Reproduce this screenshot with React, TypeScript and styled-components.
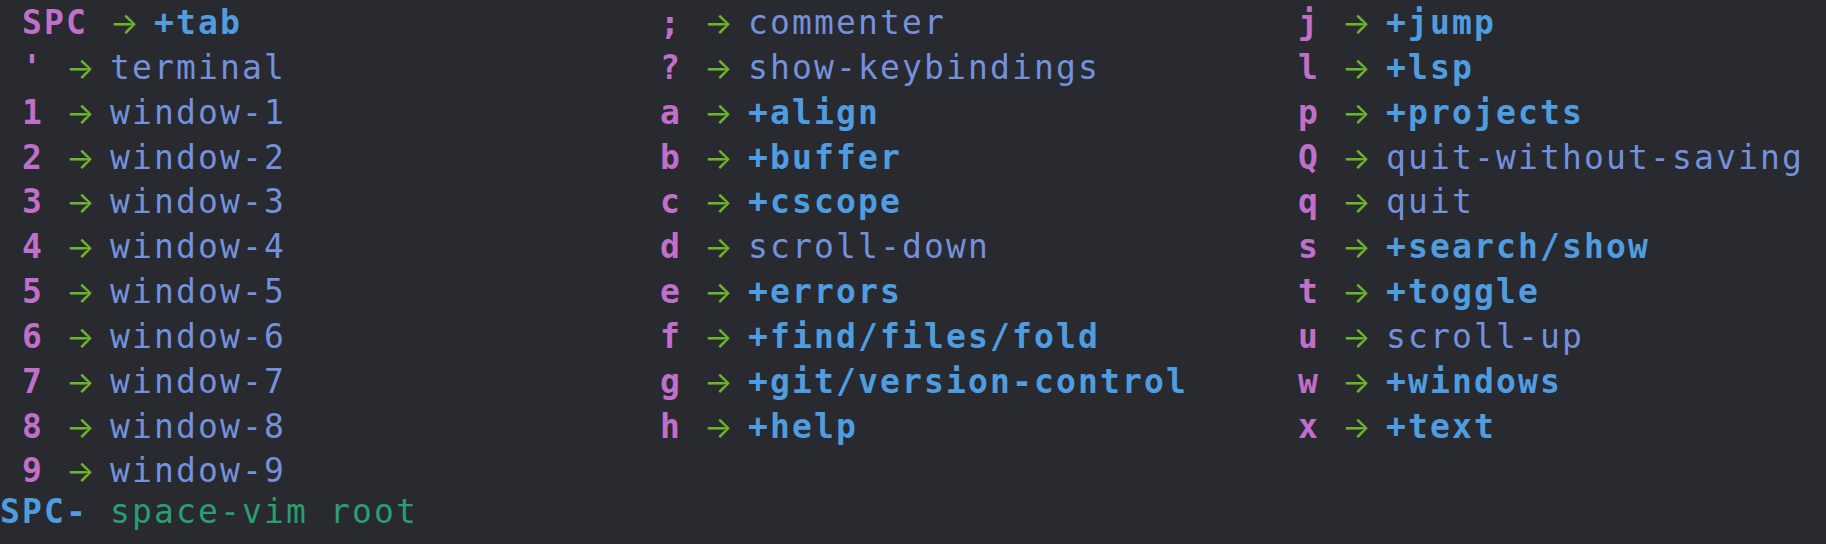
import React from "react";
import styled, { createGlobalStyle } from "styled-components";

const Global = createGlobalStyle`
  html, body {
    margin: 0;
    padding: 0;
    background: #282a2f;
  }
  body {
    width: 1826px;
    height: 544px;
    overflow: hidden;
  }
`;

const Screen = styled.div`
  width: 1826px;
  height: 544px;
  background: #282a2f;
  font-family: "DejaVu Sans Mono", "Liberation Mono", monospace;
  font-size: 33px;
  letter-spacing: 2.13px;
  white-space: pre;
  padding-top: 1px;
  box-sizing: border-box;
`;

const Grid = styled.div`
  display: grid;
  grid-template-columns: 638px 638px 550px;
`;

const Column = styled.div`
  display: flex;
  flex-direction: column;
`;

const Row = styled.div`
  height: 44.85px;
  line-height: 44.85px;
`;

const Key = styled.span`
  color: #c06fca;
  font-weight: bold;
`;

const Arrow = styled.span`
  display: inline-block;
  width: 22px;
  line-height: 1;
  text-align: center;
  letter-spacing: 0;
  color: #6db42b;
  font-family: "Inter", "Noto Sans", sans-serif;
  font-size: 30px;
  font-weight: 400;
`;

const Desc = styled.span<{ $group: boolean }>`
  color: ${(p) => (p.$group ? "#4f9de0" : "#7391dc")};
  font-weight: ${(p) => (p.$group ? "bold" : "normal")};
`;

const Footer = styled.div`
  line-height: 28px;
  height: 28px;
  margin-top: 4px;
`;

const Prefix = styled.span`
  color: #4f9de0;
  font-weight: bold;
`;

const RootName = styled.span`
  color: #2a9e70;
`;

type Entry = [string, string];

const col1: Entry[] = [
  ["SPC", "+tab"],
  ["'", "terminal"],
  ["1", "window-1"],
  ["2", "window-2"],
  ["3", "window-3"],
  ["4", "window-4"],
  ["5", "window-5"],
  ["6", "window-6"],
  ["7", "window-7"],
  ["8", "window-8"],
  ["9", "window-9"],
];

const col2: Entry[] = [
  [";", "commenter"],
  ["?", "show-keybindings"],
  ["a", "+align"],
  ["b", "+buffer"],
  ["c", "+cscope"],
  ["d", "scroll-down"],
  ["e", "+errors"],
  ["f", "+find/files/fold"],
  ["g", "+git/version-control"],
  ["h", "+help"],
];

const col3: Entry[] = [
  ["j", "+jump"],
  ["l", "+lsp"],
  ["p", "+projects"],
  ["Q", "quit-without-saving"],
  ["q", "quit"],
  ["s", "+search/show"],
  ["t", "+toggle"],
  ["u", "scroll-up"],
  ["w", "+windows"],
  ["x", "+text"],
];

const KeyColumn = ({ entries }: { entries: Entry[] }) => (
  <Column>
    {entries.map(([k, d]) => (
      <Row key={k + d}>
        {" "}
        <Key>{k}</Key> <Arrow>→</Arrow>{" "}
        <Desc $group={d.startsWith("+")}>{d}</Desc>
      </Row>
    ))}
  </Column>
);

export default function App() {
  return (
    <>
      <Global />
      <Screen>
        <Grid>
          <KeyColumn entries={col1} />
          <KeyColumn entries={col2} />
          <KeyColumn entries={col3} />
        </Grid>
        <Footer>
          <Prefix>SPC-</Prefix> <RootName>space-vim root</RootName>
        </Footer>
      </Screen>
    </>
  );
}
